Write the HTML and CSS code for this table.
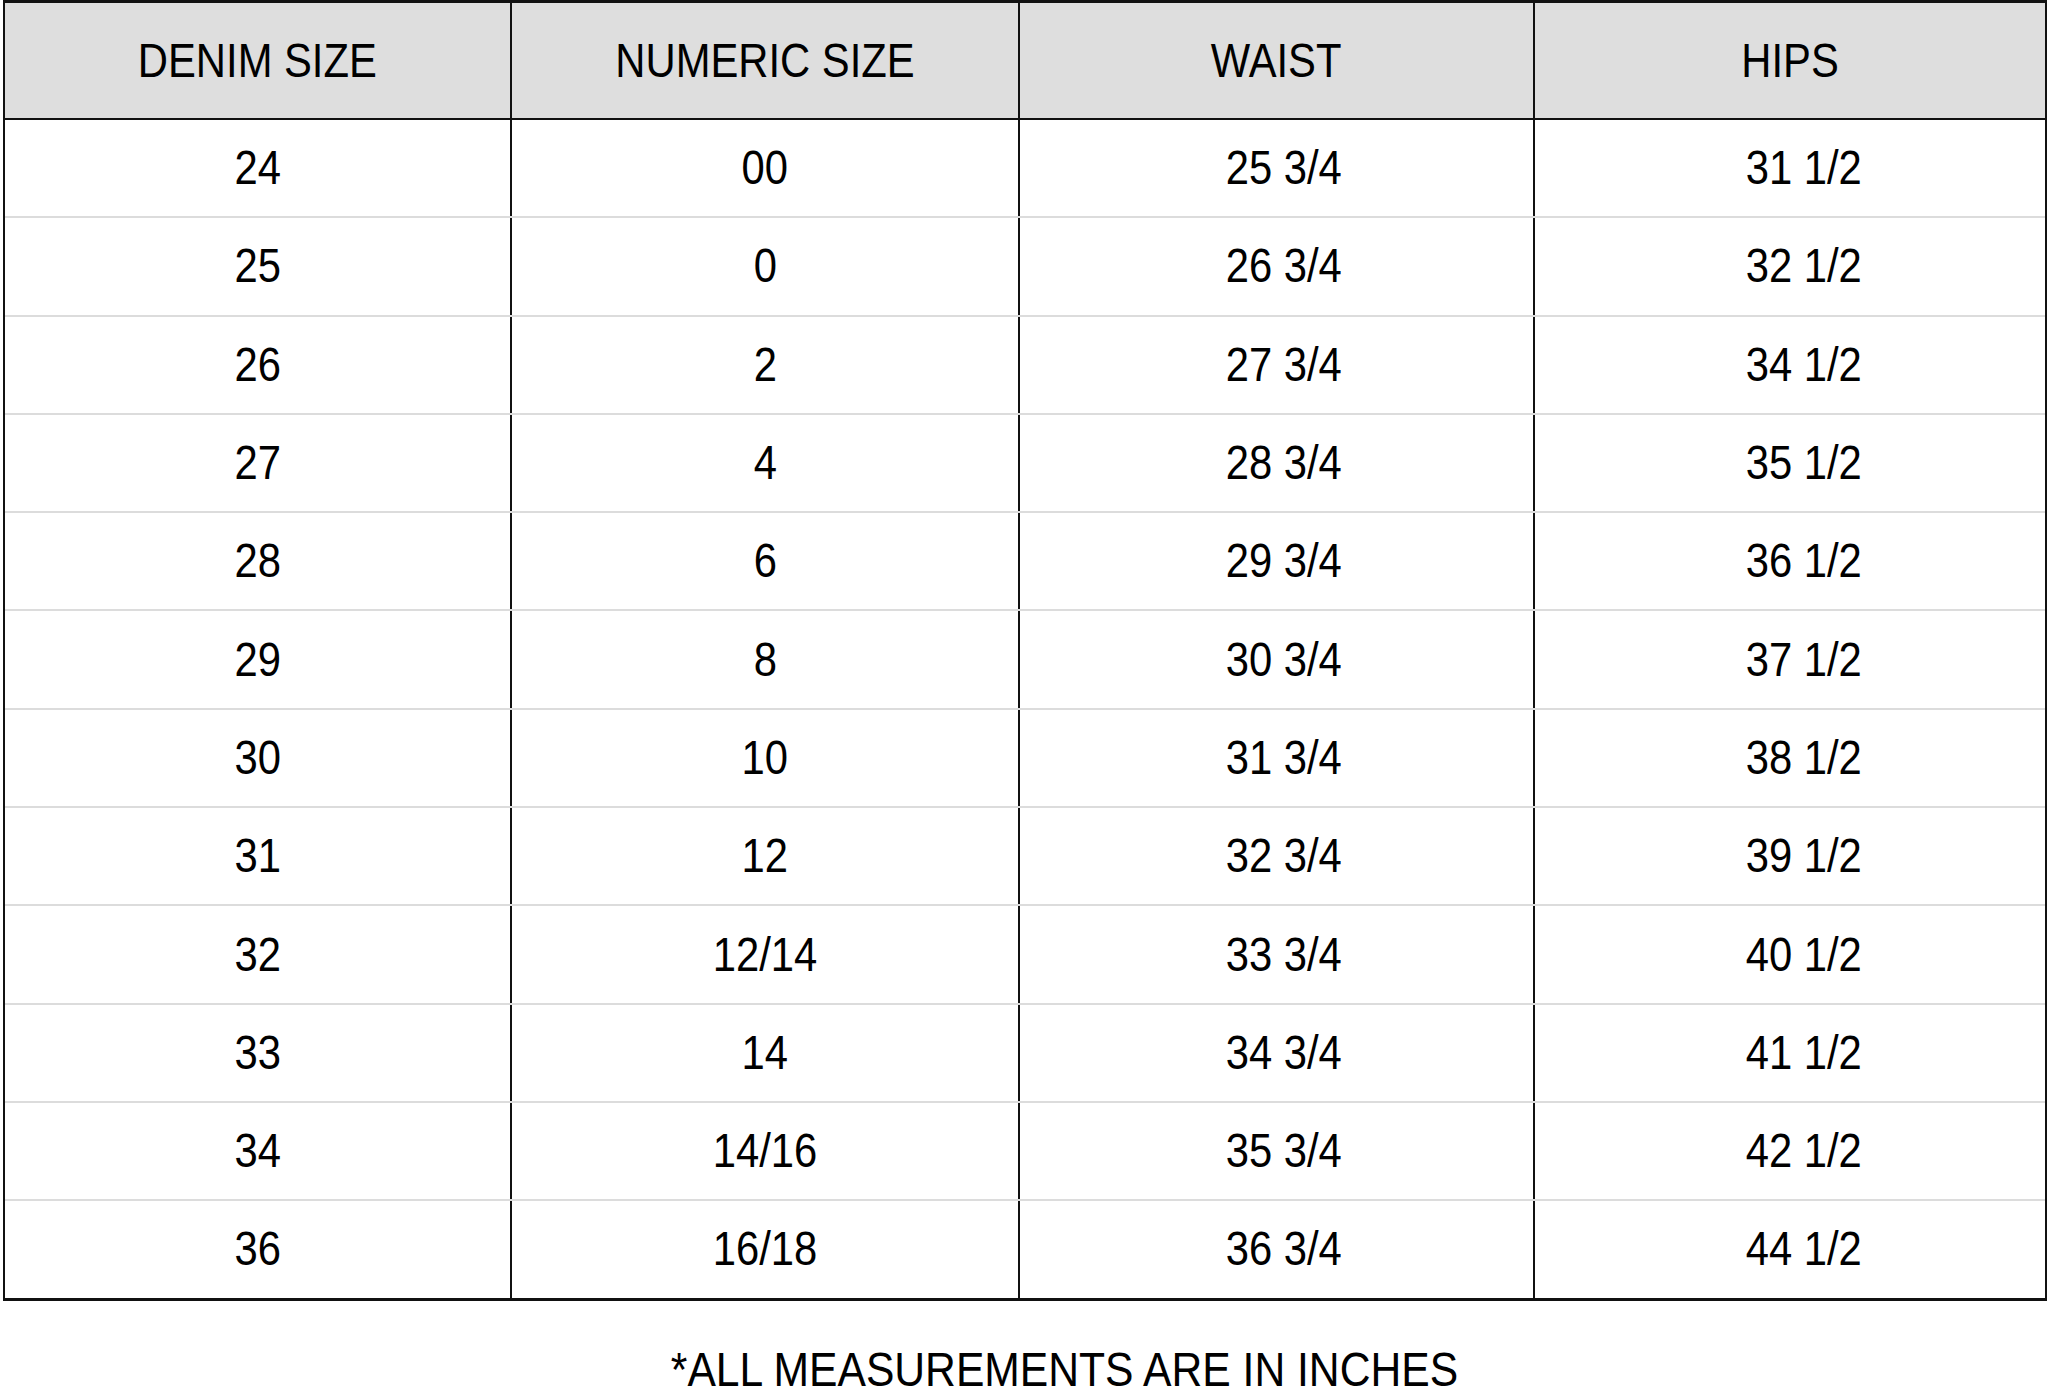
FILE: index.html
```html
<!DOCTYPE html>
<html lang="en">
<head>
<meta charset="utf-8">
<title>Denim Size Chart</title>
<link rel="stylesheet" href="styles.css">
</head>
<body>
<div class="chart">
  <div class="row head">
    <div class="cell"><span class="t">DENIM SIZE</span></div>
    <div class="cell"><span class="t">NUMERIC SIZE</span></div>
    <div class="cell"><span class="t">WAIST</span></div>
    <div class="cell"><span class="t">HIPS</span></div>
  </div>
  <div class="row"><div class="cell"><span class="t">24</span></div><div class="cell"><span class="t">00</span></div><div class="cell c3"><span class="t">25 3/4</span></div><div class="cell c4"><span class="t">31 1/2</span></div></div>
  <div class="row"><div class="cell"><span class="t">25</span></div><div class="cell"><span class="t">0</span></div><div class="cell c3"><span class="t">26 3/4</span></div><div class="cell c4"><span class="t">32 1/2</span></div></div>
  <div class="row"><div class="cell"><span class="t">26</span></div><div class="cell"><span class="t">2</span></div><div class="cell c3"><span class="t">27 3/4</span></div><div class="cell c4"><span class="t">34 1/2</span></div></div>
  <div class="row"><div class="cell"><span class="t">27</span></div><div class="cell"><span class="t">4</span></div><div class="cell c3"><span class="t">28 3/4</span></div><div class="cell c4"><span class="t">35 1/2</span></div></div>
  <div class="row"><div class="cell"><span class="t">28</span></div><div class="cell"><span class="t">6</span></div><div class="cell c3"><span class="t">29 3/4</span></div><div class="cell c4"><span class="t">36 1/2</span></div></div>
  <div class="row"><div class="cell"><span class="t">29</span></div><div class="cell"><span class="t">8</span></div><div class="cell c3"><span class="t">30 3/4</span></div><div class="cell c4"><span class="t">37 1/2</span></div></div>
  <div class="row"><div class="cell"><span class="t">30</span></div><div class="cell"><span class="t">10</span></div><div class="cell c3"><span class="t">31 3/4</span></div><div class="cell c4"><span class="t">38 1/2</span></div></div>
  <div class="row"><div class="cell"><span class="t">31</span></div><div class="cell"><span class="t">12</span></div><div class="cell c3"><span class="t">32 3/4</span></div><div class="cell c4"><span class="t">39 1/2</span></div></div>
  <div class="row"><div class="cell"><span class="t">32</span></div><div class="cell"><span class="t">12/14</span></div><div class="cell c3"><span class="t">33 3/4</span></div><div class="cell c4"><span class="t">40 1/2</span></div></div>
  <div class="row"><div class="cell"><span class="t">33</span></div><div class="cell"><span class="t">14</span></div><div class="cell c3"><span class="t">34 3/4</span></div><div class="cell c4"><span class="t">41 1/2</span></div></div>
  <div class="row"><div class="cell"><span class="t">34</span></div><div class="cell"><span class="t">14/16</span></div><div class="cell c3"><span class="t">35 3/4</span></div><div class="cell c4"><span class="t">42 1/2</span></div></div>
  <div class="row last"><div class="cell"><span class="t">36</span></div><div class="cell"><span class="t">16/18</span></div><div class="cell c3"><span class="t">36 3/4</span></div><div class="cell c4"><span class="t">44 1/2</span></div></div>
</div>
<p class="note"><span class="t">*ALL MEASUREMENTS ARE IN INCHES</span></p>
</body>
</html>
```
FILE: styles.css
```css
html, body {
  margin: 0;
  padding: 0;
  background: #ffffff;
}

body {
  font-family: "Liberation Sans", Arial, sans-serif;
  color: #000000;
}

.t {
  display: inline-block;
  transform: scaleX(0.87);
  transform-origin: center center;
  white-space: nowrap;
}

.chart {
  box-sizing: border-box;
  margin-left: 3px;
  width: 2044px;
  border-top: 3px solid #111111;
  border-bottom: 3px solid #111111;
  border-left: 2px solid #111111;
  border-right: 2px solid #111111;
}

.row {
  display: grid;
  grid-template-columns: 507px 508px 515px 510px;
  box-sizing: border-box;
  height: 98.3px;
  border-bottom: 2px solid #dcdcdc;
}

.row.last {
  height: 96.3px;
  border-bottom: none;
}

.row.head {
  height: 117px;
  background: #dedede;
  border-bottom: 2px solid #111111;
}

.cell {
  display: flex;
  align-items: center;
  justify-content: center;
  box-sizing: border-box;
  border-right: 2px solid #111111;
  font-size: 48px;
  line-height: 1;
}

.cell:last-child {
  border-right: none;
}

.c3 {
  padding-left: 15px;
}

.c4 {
  padding-left: 27px;
}

.note {
  margin: 38px 0 0 0;
  padding-left: 80px;
  text-align: center;
  font-size: 49px;
  line-height: 60px;
}
```
